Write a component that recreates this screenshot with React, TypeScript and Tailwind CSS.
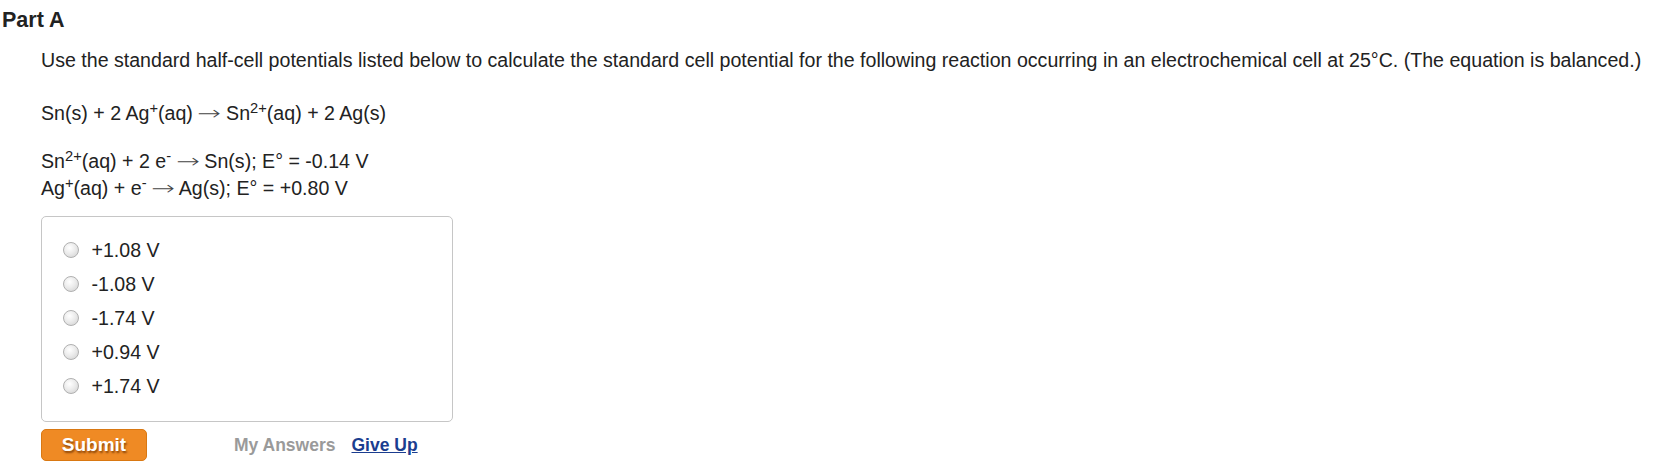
import React from "react";

const options = ["+1.08 V", "-1.08 V", "-1.74 V", "+0.94 V", "+1.74 V"];

function Radio() {
  return (
    <span className="block h-[16px] w-[16px] shrink-0 rounded-full border border-[#b0b0b0] bg-[radial-gradient(circle_at_40%_35%,#ffffff_0%,#ececec_45%,#cfcfcf_100%)]" />
  );
}

function Arrow() {
  return (
    <span className="mx-[3px] inline-block scale-x-[1.45] font-['DejaVu_Sans',sans-serif] font-extralight text-[#444]">→</span>
  );
}

export default function App() {
  return (
    <div className="min-h-[470px] w-[1660px] bg-white font-['Liberation_Sans',Arial,sans-serif] text-[#222]">
      <h2 className="pl-[2px] pt-[8px] text-[21.5px] font-bold leading-[24px] text-[#222]">Part A</h2>
      <div className="pl-[41px] text-[19.6px] leading-[26px]">
        <p className="mt-[15px]">
          Use the standard half-cell potentials listed below to calculate the standard cell potential for the following reaction occurring in an electrochemical cell at 25°C. (The equation is balanced.)
        </p>
        <p className="mt-[27px]">
          Sn(s) + 2 Ag<sup>+</sup>(aq) <Arrow /> Sn<sup>2+</sup>(aq) + 2 Ag(s)
        </p>
        <div className="mt-[21px]">
          <p>
            Sn<sup>2+</sup>(aq) + 2 e<sup>-</sup> <Arrow /> Sn(s); E° = -0.14 V
          </p>
          <p>
            Ag<sup>+</sup>(aq) + e<sup>-</sup> <Arrow /> Ag(s); E° = +0.80 V
          </p>
        </div>
        <div className="mt-[14px] flex h-[206px] w-[412px] flex-col rounded-[5px] border border-[#c6c6c6] pl-[21px] pt-[16px]">
          {options.map((o) => (
            <label key={o} className="flex h-[34px] items-center gap-[12.5px]">
              <Radio />
              <span>{o}</span>
            </label>
          ))}
        </div>
        <div className="mt-[7px] flex items-center leading-normal">
          <button className="h-[32px] w-[106px] rounded-[5px] border border-[#d97812] bg-[#ef8a24] text-[19px] font-bold text-white [text-shadow:1px_2px_2px_rgba(110,50,0,0.75)]">
            Submit
          </button>
          <span className="ml-[87px] text-[17.5px] font-bold text-[#9a9a9a]">My Answers</span>
          <a className="ml-[16px] text-[17.5px] font-bold text-[#1b3d8f] underline">Give Up</a>
        </div>
      </div>
    </div>
  );
}
